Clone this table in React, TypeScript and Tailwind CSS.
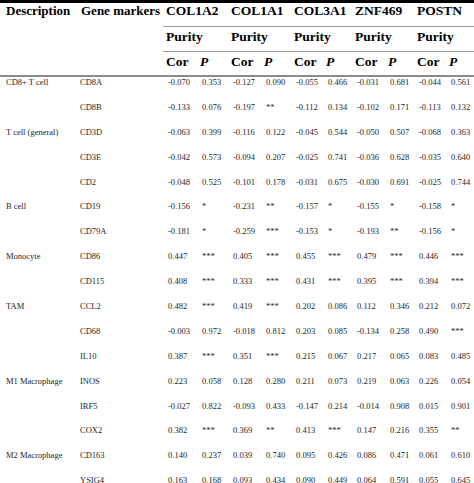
import React from "react";

type Row = {
  desc?: string;
  gene: string;
  vals: string[];
};

const genes = ["COL1A2", "COL1A1", "COL3A1", "ZNF469", "POSTN"];

const rows: Row[] = [
  { desc: "CD8+ T cell", gene: "CD8A", vals: ["-0.070", "0.353", "-0.127", "0.090", "-0.055", "0.466", "-0.031", "0.681", "-0.044", "0.561"] },
  { gene: "CD8B", vals: ["-0.133", "0.076", "-0.197", "**", "-0.112", "0.134", "-0.102", "0.171", "-0.113", "0.132"] },
  { desc: "T cell (general)", gene: "CD3D", vals: ["-0.063", "0.399", "-0.116", "0.122", "-0.045", "0.544", "-0.050", "0.507", "-0.068", "0.363"] },
  { gene: "CD3E", vals: ["-0.042", "0.573", "-0.094", "0.207", "-0.025", "0.741", "-0.036", "0.628", "-0.035", "0.640"] },
  { gene: "CD2", vals: ["-0.048", "0.525", "-0.101", "0.178", "-0.031", "0.675", "-0.030", "0.691", "-0.025", "0.744"] },
  { desc: "B cell", gene: "CD19", vals: ["-0.156", "*", "-0.231", "**", "-0.157", "*", "-0.155", "*", "-0.158", "*"] },
  { gene: "CD79A", vals: ["-0.181", "*", "-0.259", "***", "-0.153", "*", "-0.193", "**", "-0.156", "*"] },
  { desc: "Monocyte", gene: "CD86", vals: ["0.447", "***", "0.405", "***", "0.455", "***", "0.479", "***", "0.446", "***"] },
  { gene: "CD115", vals: ["0.408", "***", "0.333", "***", "0.431", "***", "0.395", "***", "0.394", "***"] },
  { desc: "TAM", gene: "CCL2", vals: ["0.482", "***", "0.419", "***", "0.202", "0.086", "0.112", "0.346", "0.212", "0.072"] },
  { gene: "CD68", vals: ["-0.003", "0.972", "-0.018", "0.812", "0.203", "0.085", "-0.134", "0.258", "0.490", "***"] },
  { gene: "IL10", vals: ["0.387", "***", "0.351", "***", "0.215", "0.067", "0.217", "0.065", "0.083", "0.485"] },
  { desc: "M1 Macrophage", gene: "INOS", vals: ["0.223", "0.058", "0.128", "0.280", "0.211", "0.073", "0.219", "0.063", "0.226", "0.054"] },
  { gene: "IRF5", vals: ["-0.027", "0.822", "-0.093", "0.433", "-0.147", "0.214", "-0.014", "0.908", "0.015", "0.901"] },
  { gene: "COX2", vals: ["0.382", "***", "0.369", "**", "0.413", "***", "0.147", "0.216", "0.355", "**"] },
  { desc: "M2 Macrophage", gene: "CD163", vals: ["0.140", "0.237", "0.039", "0.740", "0.095", "0.426", "0.086", "0.471", "0.061", "0.610"] },
  { gene: "YSIG4", vals: ["0.163", "0.168", "0.093", "0.434", "0.090", "0.449", "0.064", "0.591", "0.055", "0.645"] },
];

// column widths in px, starting 3px before each header text
const cols = "grid-cols-[80px_83px_34px_31px_33px_30px_32px_29px_33px_29px_32px_28px]";

export default function App() {
  return (
    <div className="w-[474px] h-[483px] overflow-hidden bg-white text-black [font-family:'Liberation_Serif','Times_New_Roman',serif]">
      <div className="border-t-[3px] border-black">
        {/* Header */}
        <div className={`grid ${cols} border-b-2 border-[#8a8a8a]`}>
          <div className="row-span-3 pl-[6px] text-[13px] leading-[15px] font-bold">Description</div>
          <div className="row-span-3 pl-[1px] text-[13px] leading-[15px] font-bold">Gene markers</div>
          {genes.map((g) => (
            <div key={g} className="col-span-2 h-[24px] pl-[3px] border-b border-[#9a9a9a] text-[13.5px] leading-[15px] font-bold">
              {g}
            </div>
          ))}
          {genes.map((g) => (
            <div key={g + "p"} className="col-span-2 h-[25px] pl-[3px] pt-[2px] border-b border-[#9a9a9a] text-[13.5px] leading-[15px] font-bold">
              Purity
            </div>
          ))}
          {genes.map((g) => (
            <React.Fragment key={g + "c"}>
              <div className="h-[23px] pl-[3px] pt-[2px] text-[13.5px] leading-[15px] font-bold">Cor</div>
              <div className="h-[23px] pl-[3px] pt-[2px] text-[13.5px] leading-[15px] font-bold italic">P</div>
            </React.Fragment>
          ))}
        </div>

        {/* Body */}
        <div className="text-[8.5px] leading-[10px] text-[#1e1e1e]">
          {rows.map((r) => (
            <div key={r.gene} className={`grid ${cols} h-[24.9px] items-start`}>
              <div className="pl-[6px]">{r.desc ?? ""}</div>
              <div>{r.gene}</div>
              {r.vals.map((v, i) => (
                <div key={i} className="pl-[5px]">
                  {v}
                </div>
              ))}
            </div>
          ))}
        </div>
      </div>
    </div>
  );
}
